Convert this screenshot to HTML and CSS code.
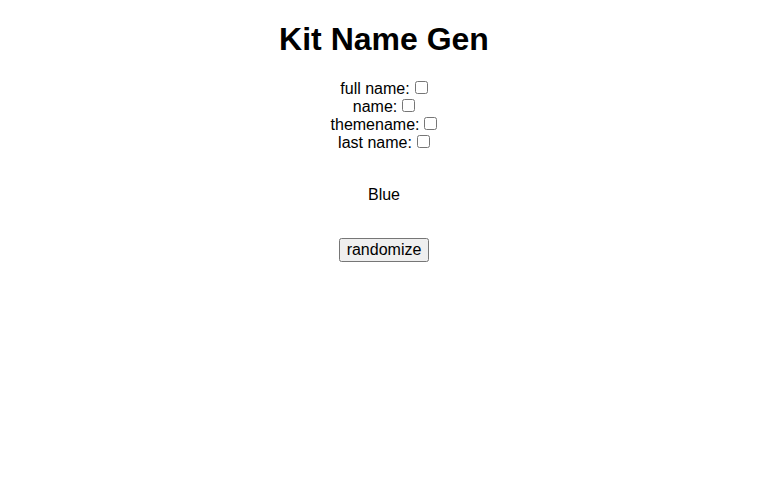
FILE: index.html
```html
<!DOCTYPE html>
<html>
<head>
<meta charset="utf-8">
<link rel="stylesheet" href="styles.css">
</head>
<body>
<div class="app">
  <h1 class="title">Kit Name Gen</h1>
  <div class="options">
    <label class="opt">full name:<input type="checkbox"></label>
    <label class="opt">name:<input type="checkbox"></label>
    <label class="opt">themename:<input type="checkbox"></label>
    <label class="opt">last name:<input type="checkbox"></label>
  </div>
  <p class="result">Blue</p>
  <button class="btn">randomize</button>
</div>
</body>
</html>
```
FILE: styles.css
```css
body {
  margin: 0 8px 8px;
  font-family: "Liberation Sans", Arial, sans-serif;
  font-size: 16px;
  color: #000;
  background: #fff;
}
.app {
  text-align: center;
  padding-top: 21px;
}
.title {
  font-size: 32px;
  font-weight: bold;
  margin: 0 0 20px;
}
.options {
  display: flex;
  flex-direction: column;
  align-items: center;
}
.opt {
  display: block;
  height: 18px;
  line-height: 18px;
}
.opt input {
  margin: 3px 0 3px 5px;
}
.result {
  margin: 36px 0 0;
  line-height: 18px;
}
.btn {
  margin-top: 34px;
  font-family: "Liberation Sans", Arial, sans-serif;
  font-size: 16px;
}
```
